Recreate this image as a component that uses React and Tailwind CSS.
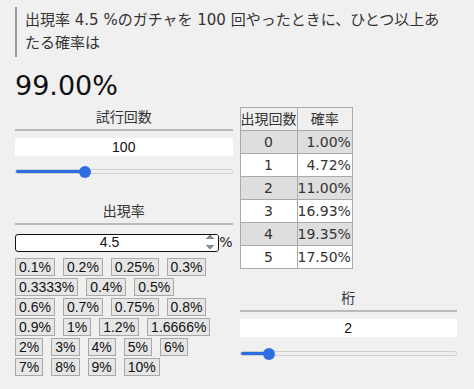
import { useState } from "react";

const RATES = [
  "0.1", "0.2", "0.25", "0.3", "0.3333", "0.4", "0.5", "0.6", "0.7", "0.75",
  "0.8", "0.9", "1", "1.2", "1.6666", "2", "3", "4", "5", "6", "7", "8", "9", "10",
];

const TABLE = [
  ["0", "1.00%"],
  ["1", "4.72%"],
  ["2", "11.00%"],
  ["3", "16.93%"],
  ["4", "19.35%"],
  ["5", "17.50%"],
];

const formFont = { fontFamily: '"Liberation Sans", Arial, sans-serif' };

function Heading({ children }) {
  return (
    <div className="text-center text-[14px] leading-[20px] text-[#333] pb-[2px] border-b-2 border-[#bbb]">
      {children}
    </div>
  );
}

function Slider({ min, max, value, onChange, className }) {
  const pct = ((value - min) / (max - min)) * 100;
  return (
    <input
      type="range"
      min={min}
      max={max}
      value={value}
      onChange={onChange}
      style={{
        background: `linear-gradient(to right, #2f6ee0 0%, #2f6ee0 ${pct}%, #efefef ${pct}%, #efefef 100%)`,
      }}
      className={
        "w-full h-[5px] appearance-none rounded-full border border-[#cfcfcf] outline-none " +
        "[&::-webkit-slider-thumb]:appearance-none [&::-webkit-slider-thumb]:w-[12px] [&::-webkit-slider-thumb]:h-[12px] " +
        "[&::-webkit-slider-thumb]:rounded-full [&::-webkit-slider-thumb]:bg-[#2f6ee0] " +
        className
      }
    />
  );
}

export default function App() {
  const [tries, setTries] = useState(100);
  const [rate, setRate] = useState("4.5");
  const [digits, setDigits] = useState(2);

  const question = `出現率 ${rate} %のガチャを ${tries} 回やったときに、ひとつ以上あたる確率は`;

  return (
    <div
      className="min-h-[389px] bg-[#f0f0f0] text-[#222] pl-[15px] pr-[17px] pt-[7px]"
      style={{ fontFamily: '"DejaVu Sans", "Noto Sans CJK JP", sans-serif' }}
    >
      {/* question */}
      <div className="border-l-2 border-[#999] pl-[8px] pr-[8px] py-[2px] text-[15px] leading-[23px] text-[#333]">
        {question}
      </div>

      <div className="mt-[13px] text-[27px] leading-[32px] text-[#111]">99.00%</div>

      <div className="grid grid-cols-2 gap-[7px] mt-[5px]">
        {/* left column */}
        <div className="flex flex-col">
          <Heading>試行回数</Heading>
          <input
            type="text"
            value={tries}
            onChange={(e) => setTries(e.target.value)}
            style={formFont}
            className="mt-[7px] h-[18px] bg-white text-center text-[14px] text-[#111] outline-none"
          />
          <Slider
            min={1}
            max={320}
            value={tries}
            onChange={(e) => setTries(e.target.value)}
            className="mt-[13px]"
          />

          <div className="mt-[27px]">
            <Heading>出現率</Heading>
          </div>
          <div className="mt-[7px] flex items-center">
            <input
              type="number"
              step="0.1"
              value={rate}
              onChange={(e) => setRate(e.target.value)}
              style={formFont}
              className="flex-1 min-w-0 h-[18px] bg-white border border-[#111] rounded-[3px] text-center text-[14px] text-[#111] outline-none [&::-webkit-inner-spin-button]:opacity-100"
            />
            <span className="text-[14px] text-[#222]">%</span>
          </div>
          <div className="mt-[5px] pr-[16px] flex flex-wrap gap-x-[8px] gap-y-[2px]">
            {RATES.map((r) => (
              <button
                key={r}
                onClick={() => setRate(r)}
                style={formFont}
                className="h-[18px] px-[3px] border border-[#a8a8a8] bg-[#e6e6e6] text-[14px] leading-[16px] text-[#111]"
              >
                {r}%
              </button>
            ))}
          </div>
        </div>

        {/* right column */}
        <div className="flex flex-col">
          <table className="border-collapse text-[14px] text-[#333] self-start">
            <thead>
              <tr className="h-[23px]">
                <th className="border border-[#aaa] px-0 font-normal w-[57px]">出現回数</th>
                <th className="border border-[#aaa] px-0 font-normal w-[55px]">確率</th>
              </tr>
            </thead>
            <tbody>
              {TABLE.map(([n, p], i) => (
                <tr key={n} className={i % 2 === 0 ? "h-[23px] bg-[#dedede]" : "h-[23px] bg-white"}>
                  <td className="border border-[#aaa] text-center">{n}</td>
                  <td className="border border-[#aaa] text-right pr-[1px]">{p}</td>
                </tr>
              ))}
            </tbody>
          </table>

          <div className="mt-[19px]">
            <Heading>桁</Heading>
          </div>
          <input
            type="text"
            value={digits}
            onChange={(e) => setDigits(e.target.value)}
            style={formFont}
            className="mt-[7px] h-[18px] bg-white text-center text-[14px] text-[#111] outline-none"
          />
          <Slider
            min={1}
            max={10}
            value={digits}
            onChange={(e) => setDigits(e.target.value)}
            className="mt-[14px]"
          />
        </div>
      </div>
    </div>
  );
}
